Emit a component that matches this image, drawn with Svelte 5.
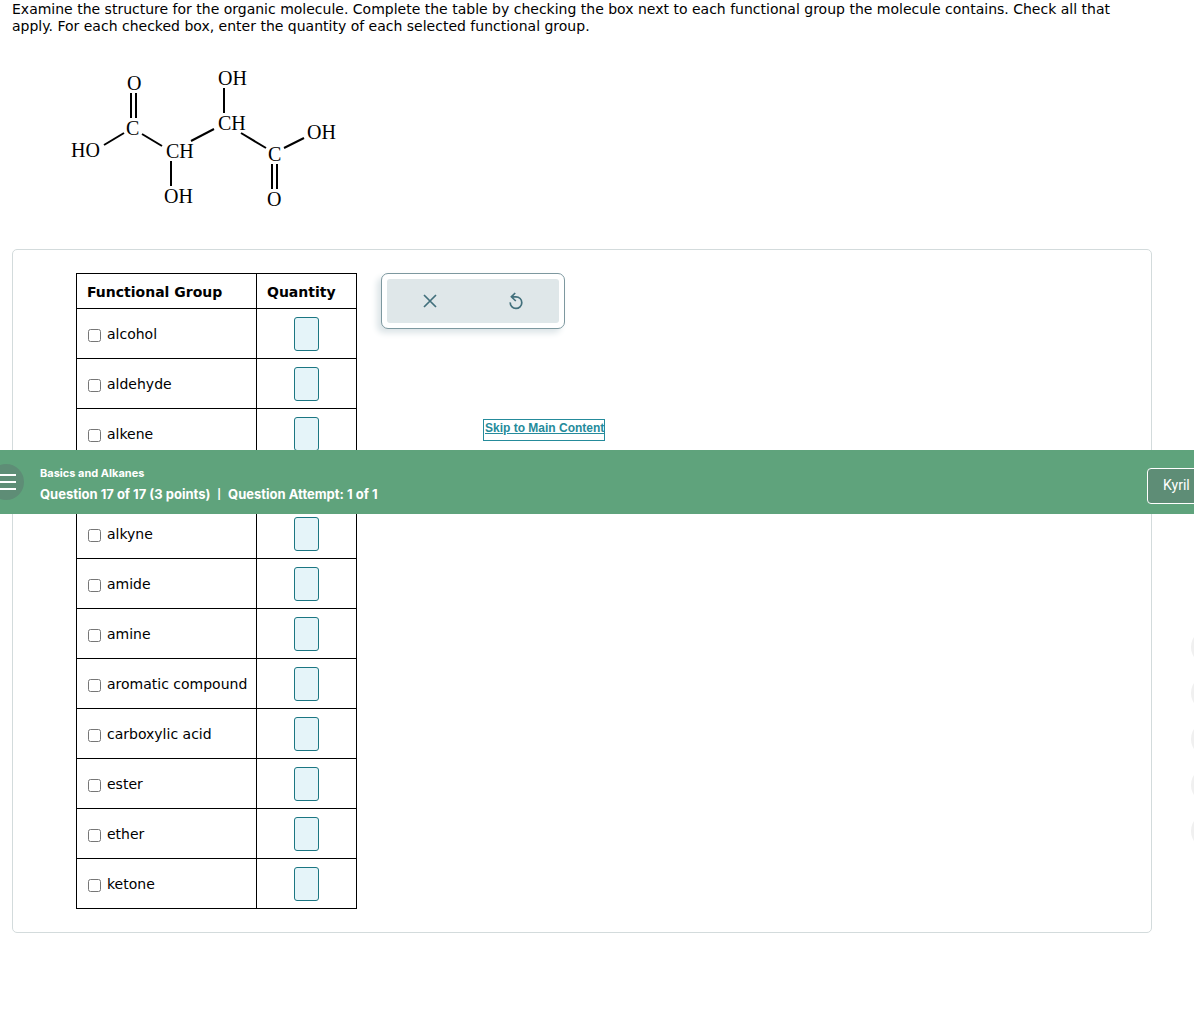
<script>
  const groups = $state(
    [
      'alcohol',
      'aldehyde',
      'alkene',
      '',
      'alkyne',
      'amide',
      'amine',
      'aromatic compound',
      'carboxylic acid',
      'ester',
      'ether',
      'ketone'
    ].map((name, i) => ({ id: `group-${i}`, name, checked: false, quantity: '' }))
  );

  const tools = ['Calculator', 'Data', 'Periodic table', 'Language', 'Accessibility'];

  // Atom labels, placed by the left end of their baseline.
  const atoms = [
    { x: 115, y: 30, label: 'O' },
    { x: 114, y: 75, label: 'C' },
    { x: 59, y: 97, label: 'HO' },
    { x: 154, y: 98, label: 'CH' },
    { x: 152, y: 143, label: 'OH' },
    { x: 206, y: 25, label: 'OH' },
    { x: 206, y: 70, label: 'CH' },
    { x: 256, y: 101, label: 'C' },
    { x: 295, y: 79, label: 'OH' },
    { x: 255, y: 146, label: 'O' }
  ];

  const bonds = [
    [119, 33, 119, 58],
    [124, 33, 124, 58],
    [92, 85, 112, 73],
    [130, 74, 150, 86],
    [179, 81, 202, 69],
    [159, 101, 159, 126],
    [212, 28, 212, 53],
    [229, 73, 254, 88],
    [272, 88, 292, 78],
    [260, 104, 260, 129],
    [265, 104, 265, 129]
  ];

  function clearAll() {
    for (const g of groups) {
      g.checked = false;
      g.quantity = '';
    }
  }
</script>

<div class="page">
  <main id="main">
    <p class="prompt">
      Examine the structure for the organic molecule. Complete the table by checking the box next to
      each functional group the molecule contains. Check all that apply. For each checked box, enter
      the quantity of each selected functional group.
    </p>

    <svg class="molecule" width="340" height="160" viewBox="0 0 340 160" role="img" aria-label="Molecule structure">
      {#each bonds as [x1, y1, x2, y2]}
        <line {x1} {y1} {x2} {y2} />
      {/each}
      {#each atoms as atom}
        <text x={atom.x} y={atom.y}>{atom.label}</text>
      {/each}
    </svg>

    <section class="answer">
      <table>
        <thead>
          <tr><th class="name">Functional Group</th><th>Quantity</th></tr>
        </thead>
        <tbody>
          {#each groups as group (group.id)}
            <tr>
              <td>
                <div class="choice">
                  <input type="checkbox" id={group.id} bind:checked={group.checked} />
                  <label for={group.id}>{group.name}</label>
                </div>
              </td>
              <td class="amount">
                <input class="box" type="text" aria-label={`Quantity ${group.name}`} bind:value={group.quantity} />
              </td>
            </tr>
          {/each}
        </tbody>
      </table>

      <div class="toolbar">
        <div class="tools">
          <button type="button" aria-label="Clear" onclick={clearAll}>
            <svg width="16" height="16" viewBox="0 0 16 16"><path d="M2 2 14 14M14 2 2 14" /></svg>
          </button>
          <button type="button" aria-label="Reset" onclick={clearAll}>
            <svg width="16" height="20" viewBox="0 0 16 20">
              <path d="M2.2 11.4A5.8 5.8 0 1 0 8 5.8H3.6M7.2 2 3.4 5.8 7.8 10" />
            </svg>
          </button>
        </div>
      </div>
    </section>
  </main>

  <a class="skip" href="#main">Skip to Main Content</a>

  <header class="banner">
    <button type="button" class="menu" aria-label="Menu">
      <svg width="20" height="16" viewBox="0 0 20 16"><path d="M0 1h20M0 8h20M0 15h20" /></svg>
    </button>
    <div class="titles">
      <div class="topic">Basics and Alkanes</div>
      <div class="question">
        <span>Question 17 of 17 (3 points)</span><span class="bar">|</span><span>Question Attempt: 1 of 1</span>
      </div>
    </div>
    <button type="button" class="user">Kyril</button>
  </header>

  <nav class="rail" aria-label="Tools">
    {#each tools as tool}
      <button type="button" aria-label={tool}></button>
    {/each}
  </nav>
</div>

<style>
  :global(body) {
    background: #fff;
  }
  .page {
    position: relative;
    overflow: hidden;
    min-height: 100vh;
    color: #000;
    font-family: Verdana, 'DejaVu Sans', sans-serif;
    font-size: 14px;
    line-height: 17px;
  }
  main {
    padding: 1px 42px 90px 12px;
  }
  .prompt {
    margin: 0;
    max-width: 1130px;
  }
  .molecule {
    display: block;
    margin: 25px 0 29px;
    font-family: 'Liberation Serif', serif;
    font-size: 20px;
  }
  .molecule line {
    stroke: #000;
    stroke-width: 2;
  }
  .answer {
    display: flex;
    align-items: flex-start;
    gap: 24px;
    padding: 23px 63px;
    border: 1px solid #d3dbdc;
    border-radius: 5px;
  }
  table {
    width: 281px;
    table-layout: fixed;
    border-collapse: collapse;
  }
  th,
  td {
    box-sizing: border-box;
    border: 1px solid #000;
    padding: 0 10px;
    text-align: left;
  }
  th {
    height: 35px;
    padding-top: 2px;
    font-weight: bold;
  }
  td {
    height: 50px;
  }
  .name {
    width: 180px;
  }
  .choice {
    display: flex;
    align-items: center;
    gap: 6px;
    padding-top: 2px;
    white-space: nowrap;
  }
  .choice input {
    width: 13px;
    height: 13px;
    margin: 1px 0 0 1px;
  }
  .amount {
    text-align: center;
  }
  .box {
    display: block;
    box-sizing: border-box;
    width: 25px;
    height: 34px;
    margin: 0 auto;
    padding: 2px;
    border: 1px solid #1b7682;
    border-radius: 3px;
    background: #e5f4f9;
    font: inherit;
    text-align: center;
  }
  .toolbar {
    padding: 5px;
    border: 1px solid #7d989f;
    border-radius: 7px;
    background: #fff;
    box-shadow: -4px 4px 6px #dce4e7;
  }
  .tools {
    display: flex;
    border-radius: 3px;
    background: #dfe7e9;
  }
  .tools button {
    display: flex;
    align-items: center;
    justify-content: center;
    width: 86px;
    height: 44px;
    padding: 0;
    border: 0;
    background: none;
  }
  .tools path {
    fill: none;
    stroke: #42707c;
    stroke-width: 1.7;
  }
  .skip {
    position: absolute;
    top: 419px;
    left: 483px;
    box-sizing: border-box;
    height: 22px;
    padding: 0 0 0 1px;
    border: 1px solid #258b9b;
    color: #258b9b;
    font: bold 12px/16px 'Liberation Sans', Arial, sans-serif;
    white-space: nowrap;
  }
  .banner {
    position: absolute;
    top: 450px;
    left: 0;
    right: 0;
    display: flex;
    align-items: center;
    height: 64px;
    overflow: hidden;
    background: #5fa37c;
    color: #fff;
    font-family: Inter, 'Liberation Sans', sans-serif;
    font-weight: 700;
  }
  .menu {
    display: flex;
    flex: none;
    align-items: center;
    justify-content: center;
    width: 36px;
    height: 36px;
    margin-left: -12px;
    padding: 0;
    border: 0;
    border-radius: 50%;
    background: #5e8d76;
  }
  .menu path {
    stroke: #fff;
    stroke-width: 2;
  }
  .titles {
    margin: 4px 0 0 16px;
    white-space: nowrap;
  }
  .topic {
    font-size: 11px;
    line-height: 20px;
  }
  .question {
    display: flex;
    align-items: center;
    gap: 7px;
    font-size: 13px;
    line-height: 22px;
  }
  .bar {
    font-size: 10px;
  }
  .user {
    flex: none;
    width: 90px;
    height: 36px;
    margin: 8px -43px 0 auto;
    padding: 0 15px 2px;
    border: 1px solid #fff;
    border-radius: 4px;
    background: #5e8d76;
    color: #fff;
    font: 14px Roboto, 'Open Sans', sans-serif;
    text-align: left;
  }
  .rail {
    position: absolute;
    top: 629px;
    right: -33px;
    display: grid;
    gap: 10px;
  }
  .rail button {
    width: 36px;
    height: 36px;
    padding: 0;
    border: 0;
    border-radius: 50%;
    background: #f0f0f0;
  }
</style>
